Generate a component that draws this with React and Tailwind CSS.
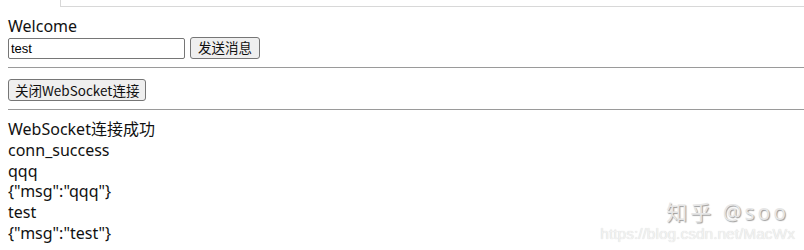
export default function App() {
  const messages = [
    "WebSocket连接成功",
    "conn_success",
    "qqq",
    '{"msg":"qqq"}',
    "test",
    '{"msg":"test"}',
  ];

  return (
    <div
      className="relative w-[804px] h-[250px] overflow-hidden bg-white text-[#111]"
      style={{ fontFamily: '"Noto Sans", "Noto Sans CJK SC", sans-serif' }}
    >
      {/* leftover frame from the page above */}
      <div className="ml-[60px] h-[7px] border-l border-b border-[#d8d8d8]" />

      <div className="pl-[8px]">
        <div className="text-[16px] leading-[21px] mt-[9px]">Welcome</div>
        <div className="flex items-center gap-[5px]">
          <input
            defaultValue="test"
            className="w-[177px] h-[21px] px-[2px] border border-[#767676] rounded-[2px] text-[13px] text-black outline-none"
            style={{ fontFamily: '"Liberation Sans", Arial, sans-serif' }}
          />
          <button className="h-[22px] px-[7px] bg-[#efefef] border border-[#767676] rounded-[3px] text-[13.5px] leading-[18px]">
            发送消息
          </button>
        </div>
        <hr className="mt-[8px] border-t border-[#9a9a9a]" />
        <button
          className="mt-[11px] h-[22px] px-[6px] bg-[#efefef] border border-[#767676] rounded-[3px] text-[13.5px] leading-[18px]"
          style={{ fontFamily: '"Noto Sans CJK SC", "Liberation Sans", sans-serif' }}
        >
          关闭WebSocket连接
        </button>
        <hr className="mt-[7px] border-t border-[#9a9a9a]" />
        <div className="mt-[9px] text-[16px] leading-[20.8px]">
          {messages.map((m, i) => (
            <div key={i}>{m}</div>
          ))}
        </div>
      </div>

      {/* watermark */}
      <div className="absolute right-[9px] bottom-[8px] flex flex-col items-end pointer-events-none">
        <div
          className="text-[21px] leading-[25px] tracking-[3px] text-[#e6e6e6] mr-[6px]"
          style={{ textShadow: "1px 1px 1px #9a9a9a" }}
        >
          知乎 @soo
        </div>
        <div
          className="text-[15.5px] leading-[17px] text-[#f2f2f2]"
          style={{ fontFamily: '"Liberation Sans", Arial, sans-serif', textShadow: "0 0 1px #cfcfcf" }}
        >
          https://blog.csdn.net/MacWx
        </div>
      </div>
    </div>
  );
}
